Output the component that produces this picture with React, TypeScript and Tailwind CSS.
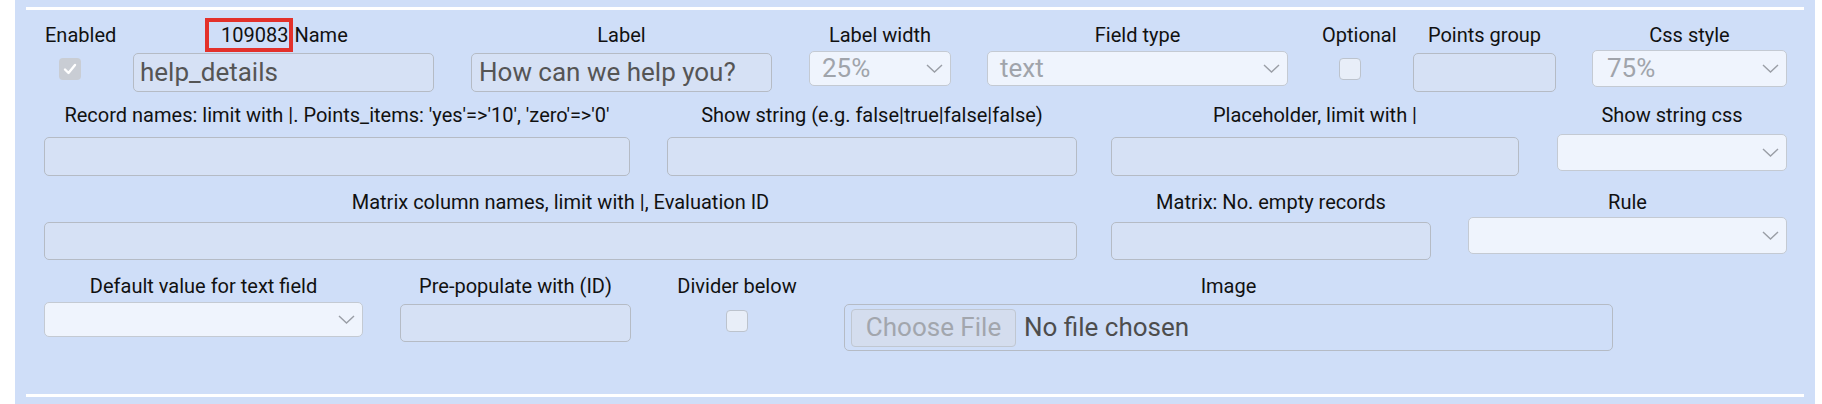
import React from 'react';

type FieldProps = {
  label: React.ReactNode;
  className?: string;
  align?: 'center' | 'start';
  children: React.ReactNode;
};

function Field({ label, className = '', align = 'center', children }: FieldProps) {
  return (
    <div className={`flex shrink-0 flex-col ${align === 'center' ? 'items-center' : 'items-start'} ${className}`}>
      <div className="flex h-[24px] items-center whitespace-nowrap text-[20px] leading-[24px] text-[#111]">{label}</div>
      {children}
    </div>
  );
}

function TextBox({ className = '', text }: { className?: string; text?: string }) {
  return (
    <div
      className={`flex w-full items-center rounded-[5px] border border-[#b5bbc5] bg-[#d6e1f5] pl-[6px] text-[26px] text-[#555] ${className}`}
    >
      {text}
    </div>
  );
}

function Chevron() {
  return (
    <svg width="17" height="9" viewBox="0 0 17 9" fill="none" stroke="#9a9ea6" strokeWidth="1.4">
      <polyline points="1,1 8.5,8 16,1" />
    </svg>
  );
}

function SelectBox({ className = '', text }: { className?: string; text?: string }) {
  return (
    <div
      className={`flex w-full items-center justify-between rounded-[5px] border border-[#c4cad3] bg-[#eff4fd] pl-[12px] pr-[7px] text-[26px] text-[#a0a4ab] ${className}`}
    >
      <span>{text}</span>
      <Chevron />
    </div>
  );
}

function CheckBox({ className = '', checked = false }: { className?: string; checked?: boolean }) {
  if (checked) {
    return (
      <div className={`flex h-[22px] w-[22px] items-center justify-center rounded-[4px] bg-[#c9cdd4] ${className}`}>
        <svg width="14" height="12" viewBox="0 0 14 12" fill="none" stroke="#fff" strokeWidth="2.4" strokeLinecap="round" strokeLinejoin="round">
          <polyline points="2,6.5 5.5,10 12,2" />
        </svg>
      </div>
    );
  }
  return <div className={`h-[22px] w-[22px] rounded-[4px] border border-[#bcc3cd] bg-[#e8eef8] ${className}`} />;
}

export default function App() {
  return (
    <div className="h-[404px] w-[1822px] bg-white font-['Roboto','Liberation_Sans',sans-serif]">
      <div className="ml-[15px] h-[404px] w-[1800px] overflow-hidden bg-[#cfdef8] pt-[7px]">
        <div className="mx-[11px] h-[3px] bg-white" />

        {/* row 1 */}
        <div className="mt-[13px] flex items-start pl-[29px]">
          <Field label={<span className="pl-[1px]">Enabled</span>} align="start" className="w-[72px]">
            <CheckBox checked className="ml-[15px] mt-[11px]" />
          </Field>
          <Field
            align="start"
            className="ml-[17px] w-[301px]"
            label={
              <span className="ml-[72px] flex items-center">
                <span className="border-4 border-[#e3312b] py-[1px] pl-[12px] pr-[1px] leading-[24px]">109083</span>
                <span className="ml-[1px]">Name</span>
              </span>
            }
          >
            <TextBox text="help_details" className="mt-[6px] h-[39px]" />
          </Field>
          <Field label="Label" className="ml-[37px] w-[301px]">
            <TextBox text="How can we help you?" className="mt-[6px] h-[39px] pl-[7px]" />
          </Field>
          <Field label="Label width" className="ml-[37px] w-[142px]">
            <SelectBox text="25%" className="mt-[4px] h-[35px]" />
          </Field>
          <Field label="Field type" className="ml-[36px] w-[301px]">
            <SelectBox text="text" className="mt-[4px] h-[35px] pl-[11px]" />
          </Field>
          <Field label="Optional" align="start" className="ml-[34px] w-[80px]">
            <CheckBox className="ml-[17px] mt-[11px]" />
          </Field>
          <Field label="Points group" className="ml-[11px] w-[143px]">
            <TextBox className="mt-[6px] h-[39px]" />
          </Field>
          <Field label="Css style" className="ml-[36px] w-[195px]">
            <SelectBox text="75%" className="mt-[3px] h-[37px] pl-[14px]" />
          </Field>
        </div>

        {/* row 2 */}
        <div className="mt-[11px] flex items-start pl-[29px]">
          <Field label="Record names: limit with |. Points_items: 'yes'=>'10', 'zero'=>'0'" className="w-[586px]">
            <TextBox className="mt-[10px] h-[39px]" />
          </Field>
          <Field label="Show string (e.g. false|true|false|false)" className="ml-[37px] w-[410px]">
            <TextBox className="mt-[10px] h-[39px]" />
          </Field>
          <Field label="Placeholder, limit with |" className="ml-[34px] w-[408px]">
            <TextBox className="mt-[10px] h-[39px]" />
          </Field>
          <Field label="Show string css" className="ml-[38px] w-[230px]">
            <SelectBox className="mt-[7px] h-[37px]" />
          </Field>
        </div>

        {/* row 3 */}
        <div className="mt-[14px] flex items-start pl-[29px]">
          <Field label="Matrix column names, limit with |, Evaluation ID" className="w-[1033px]">
            <TextBox className="mt-[8px] h-[38px]" />
          </Field>
          <Field label="Matrix: No. empty records" className="ml-[34px] w-[320px]">
            <TextBox className="mt-[8px] h-[38px]" />
          </Field>
          <Field label="Rule" className="ml-[37px] w-[319px]">
            <SelectBox className="mt-[3px] h-[37px]" />
          </Field>
        </div>

        {/* row 4 */}
        <div className="mt-[14px] flex items-start pl-[29px]">
          <Field label="Default value for text field" className="w-[319px]">
            <SelectBox className="mt-[4px] h-[35px]" />
          </Field>
          <Field label="Pre-populate with (ID)" className="ml-[37px] w-[231px]">
            <TextBox className="mt-[6px] h-[38px]" />
          </Field>
          <Field label="Divider below" className="ml-[66px] w-[80px]">
            <CheckBox className="mt-[12px] h-[21px] w-[21px]" />
          </Field>
          <Field label="Image" className="ml-[67px] w-[769px]">
            <div className="mt-[6px] flex h-[47px] w-full items-center rounded-[5px] border border-[#b5bbc5] pl-[6px] text-[26px]">
              <div className="flex h-[38px] w-[165px] items-center justify-center rounded-[4px] border border-[#c0c7d1] bg-[#d4ddee] text-[#a2a6ad]">
                Choose File
              </div>
              <span className="ml-[8px] text-[#4d4d4d]">No file chosen</span>
            </div>
          </Field>
        </div>

        <div className="mx-[11px] mt-[43px] h-[3px] bg-white" />
      </div>
    </div>
  );
}
